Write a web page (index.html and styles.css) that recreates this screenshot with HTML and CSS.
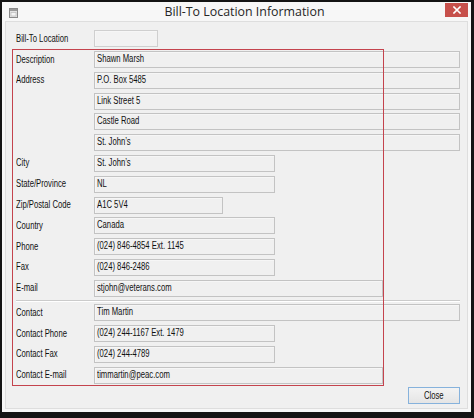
FILE: index.html
```html
<!DOCTYPE html>
<html>
<head>
<meta charset="utf-8">
<title>Bill-To Location Information</title>
<link rel="stylesheet" href="styles.css">
</head>
<body>
<div class="window">
  <div class="titlebar">
    <svg class="app-icon" width="9" height="10" viewBox="0 0 9 10">
      <rect x="0.5" y="0.5" width="8" height="9" fill="#e4e4e4" stroke="#8a8a8a"/>
      <rect x="1" y="1" width="7" height="2" fill="#9a9a9a"/>
      <rect x="2" y="4.5" width="5" height="3.5" fill="#f4f4f4" stroke="#b5b5b5" stroke-width="0.6"/>
    </svg>
    <div class="title">Bill-To Location Information</div>
    <div class="close-btn">
      <svg width="8" height="8" viewBox="0 0 8 8"><path d="M1 1 L7 7 M7 1 L1 7" stroke="#fff" stroke-width="1.6" stroke-linecap="square"/></svg>
    </div>
  </div>
  <div class="client">
    <div class="row">
      <span class="label"><span class="txt">Bill-To Location</span></span>
      <span class="field w-xs disabled"></span>
    </div>
    <div class="group">
      <div class="row"><span class="label"><span class="txt">Description</span></span><span class="field w-full"><span class="txt">Shawn Marsh</span></span></div>
      <div class="row"><span class="label"><span class="txt">Address</span></span><span class="field w-full"><span class="txt">P.O. Box 5485</span></span></div>
      <div class="row"><span class="label"></span><span class="field w-full"><span class="txt">Link Street 5</span></span></div>
      <div class="row"><span class="label"></span><span class="field w-full"><span class="txt">Castle Road</span></span></div>
      <div class="row"><span class="label"></span><span class="field w-full"><span class="txt">St. John’s</span></span></div>
      <div class="row"><span class="label"><span class="txt">City</span></span><span class="field w-md"><span class="txt">St. John’s</span></span></div>
      <div class="row"><span class="label"><span class="txt">State/Province</span></span><span class="field w-md"><span class="txt">NL</span></span></div>
      <div class="row"><span class="label"><span class="txt">Zip/Postal Code</span></span><span class="field w-sm"><span class="txt">A1C 5V4</span></span></div>
      <div class="row"><span class="label"><span class="txt">Country</span></span><span class="field w-md"><span class="txt">Canada</span></span></div>
      <div class="row"><span class="label"><span class="txt">Phone</span></span><span class="field w-md"><span class="txt">(024) 846-4854 Ext. 1145</span></span></div>
      <div class="row"><span class="label"><span class="txt">Fax</span></span><span class="field w-md"><span class="txt">(024) 846-2486</span></span></div>
      <div class="row"><span class="label"><span class="txt">E-mail</span></span><span class="field w-lg"><span class="txt">stjohn@veterans.com</span></span></div>
      <div class="separator"></div>
      <div class="row"><span class="label"><span class="txt">Contact</span></span><span class="field w-full"><span class="txt">Tim Martin</span></span></div>
      <div class="row"><span class="label"><span class="txt">Contact Phone</span></span><span class="field w-md"><span class="txt">(024) 244-1167 Ext. 1479</span></span></div>
      <div class="row"><span class="label"><span class="txt">Contact Fax</span></span><span class="field w-md"><span class="txt">(024) 244-4789</span></span></div>
      <div class="row"><span class="label"><span class="txt">Contact E-mail</span></span><span class="field w-lg"><span class="txt">timmartin@peac.com</span></span></div>
    </div>
    <div class="actions">
      <button class="btn"><span class="txt">Close</span></button>
    </div>
    <div class="annotation"></div>
  </div>
</div>
</body>
</html>
```

FILE: styles.css
```css
* { box-sizing: border-box; }

html, body {
  margin: 0;
  padding: 0;
  width: 474px;
  height: 418px;
  background: #141414;
  overflow: hidden;
}

.window {
  position: relative;
  margin: 2px 3px 6px 2px;
  width: 469px;
  height: 410px;
  background: #f7f7f7;
  display: flex;
  flex-direction: column;
}

.titlebar {
  height: 20px;
  display: flex;
  align-items: flex-start;
}

.app-icon {
  margin: 6px 0 0 7px;
  flex: none;
}

.title {
  flex: 1;
  text-align: center;
  padding-left: 26px;
  padding-top: 2px;
  font-family: "Segoe UI", "Open Sans", "Liberation Sans", sans-serif;
  font-size: 12.4px;
  line-height: 16px;
  color: #262626;
}

.close-btn {
  flex: none;
  width: 23px;
  height: 14px;
  margin: 1px 3px 0 0;
  background: #c7504b;
  display: flex;
  align-items: center;
  justify-content: center;
}

.close-btn svg { display: block; }

.client {
  position: relative;
  flex: 1;
  margin: 0 4px 4px 4px;
  background: #f0f0f0;
  box-shadow: 0 0 0 1px #dedede;
  padding: 8px 7px 0 10px;
  display: flex;
  flex-direction: column;
  font-family: "Liberation Sans", Arial, sans-serif;
  font-size: 10px;
  color: #111;
}

.txt {
  display: inline-block;
  transform: scaleX(0.77);
  transform-origin: 0 50%;
  white-space: nowrap;
}

.group {
  margin-top: 4px;
  display: flex;
  flex-direction: column;
  gap: 3.8px;
}

.row {
  display: flex;
  align-items: center;
  height: 17px;
}

.label {
  flex: none;
  width: 78px;
  white-space: nowrap;
  line-height: 12px;
}

.field {
  height: 17px;
  border: 1px solid #c3c3c3;
  background: #f0f0f0;
  padding: 0 2px;
  line-height: 14px;
  white-space: nowrap;
  overflow: hidden;
  box-shadow: inset 1px 1px 0 #f6f6f6;
}

.field.disabled {
  border-color: #cfcfcf;
  background: #f2f2f2;
}

.w-full { flex: 1; }
.w-lg { width: 289px; }
.w-md { width: 181px; }
.w-sm { width: 129px; }
.w-xs { width: 64px; }

.separator {
  margin: -1px 0;
  height: 2px;
  border-top: 1px solid #cbcbcb;
  border-bottom: 1px solid #ffffff;
}

.actions {
  margin-top: 3.6px;
  display: flex;
  justify-content: flex-end;
}

.btn {
  width: 52px;
  height: 17px;
  padding: 0;
  border: 1px solid #86b2dc;
  background: linear-gradient(#f3f3f3, #e5e5e5);
  font-family: inherit;
  font-size: 10px;
  color: #111;
  line-height: 15px;
}

.btn .txt {
  transform-origin: 50% 50%;
}

.annotation {
  position: absolute;
  left: 6px;
  top: 27px;
  width: 372px;
  height: 337px;
  border: 1px solid #c4434d;
  pointer-events: none;
}
```
